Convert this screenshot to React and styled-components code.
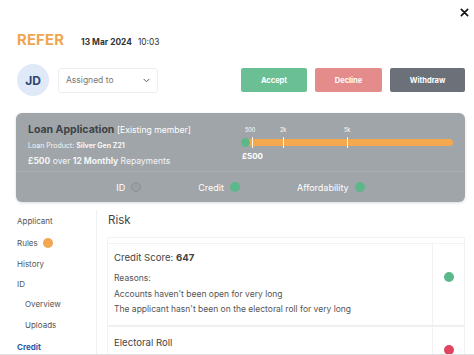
import React from "react";
import styled, { createGlobalStyle } from "styled-components";

const Global = createGlobalStyle`
  html, body { margin: 0; padding: 0; background: #fff; }
  body { font-family: Inter, "Open Sans", sans-serif; color: #555; }
  * { box-sizing: border-box; }
`;

const Modal = styled.div`
  width: 474px;
  height: 355px;
  overflow: hidden;
  padding: 0 9px 0 16px;
  border-bottom: 1px solid #ddd;
`;

const CloseRow = styled.div`
  display: flex;
  justify-content: flex-end;
  height: 24px;
  padding-top: 8px;
  margin-right: -4px;
`;

const TitleRow = styled.div`
  display: flex;
  align-items: baseline;
  gap: 17px;
  margin-top: 7px;
  padding-left: 1px;
`;

const Status = styled.span`
  color: #f0a650;
  font-weight: 700;
  font-size: 14.8px;
  letter-spacing: 0.2px;
`;

const DateText = styled.span`
  font-size: 8.4px;
  color: #333;
  font-weight: ${(p) => (p.$bold ? 700 : 400)};
  margin-left: ${(p) => (p.$bold ? 0 : "-11px")};
`;

const ActionRow = styled.div`
  display: flex;
  align-items: center;
  margin-top: 15px;
  height: 32px;
`;

const Avatar = styled.div`
  width: 32px;
  height: 32px;
  border-radius: 50%;
  background: #dfe9f8;
  color: #2c4775;
  font-weight: 700;
  font-size: 12px;
  display: flex;
  align-items: center;
  justify-content: center;
  margin-left: 1px;
`;

const Select = styled.div`
  margin-left: 9px;
  width: 100px;
  height: 25px;
  border: 1px solid #eceef0;
  border-radius: 3px;
  display: flex;
  align-items: center;
  justify-content: space-between;
  padding: 0 7px 0 7px;
  font-size: 8.5px;
  color: #777;
`;

const Buttons = styled.div`
  margin-left: auto;
  display: flex;
  gap: 8px;
`;

const Btn = styled.button`
  border: none;
  border-radius: 2px;
  height: 24px;
  width: ${(p) => p.$w}px;
  background: ${(p) => p.$bg};
  color: #fff;
  font-family: inherit;
  font-weight: 700;
  font-size: 7.5px;
  padding: 0;
`;

const Card = styled.div`
  margin-top: 17px;
  height: 89px;
  background: #a0a5a9;
  border-radius: 6px;
  box-shadow: 0 1px 3px rgba(0, 0, 0, 0.15);
  display: flex;
  flex-direction: column;
`;

const CardTop = styled.div`
  display: flex;
  padding: 10px 12px 0 12px;
  height: 59px;
  border-bottom: 1px solid rgba(255, 255, 255, 0.12);
`;

const Info = styled.div`
  width: 214px;
  display: flex;
  flex-direction: column;
`;

const InfoTitle = styled.div`
  font-size: 10.5px;
  font-weight: 700;
  color: #3d4246;
  line-height: 13px;
  span {
    font-weight: 400;
    color: #fff;
    font-size: 8.6px;
  }
`;

const InfoLine = styled.div`
  color: #f4f5f6;
  font-size: ${(p) => p.$size}px;
  margin-top: ${(p) => p.$mt}px;
  line-height: 12px;
  b { font-weight: 700; }
`;

const Range = styled.div`
  flex: 1;
  display: flex;
  flex-direction: column;
`;

const Ticks = styled.div`
  position: relative;
  height: 10px;
  font-size: 5.5px;
  color: #fff;
  margin-top: 4px;
`;

const TickLabel = styled.span`
  position: absolute;
  left: ${(p) => p.$x}px;
  top: 0;
`;

const Track = styled.div`
  position: relative;
  height: 7px;
  margin-top: 2px;
  background: #f4a94e;
  border-radius: 4px;
`;

const Knob = styled.div`
  position: absolute;
  left: -1px;
  top: -1px;
  width: 9px;
  height: 9px;
  border-radius: 50%;
  background: #5cb88a;
`;

const Pointer = styled.div`
  position: absolute;
  left: 8px;
  top: 5px;
  width: 0;
  height: 0;
  border-left: 3px solid transparent;
  border-right: 3px solid transparent;
  border-top: 4px solid #f4a94e;
`;

const TickMark = styled.div`
  position: absolute;
  left: ${(p) => p.$x}px;
  top: -2px;
  width: 1px;
  height: 11px;
  background: #fff5e0;
`;

const Amount = styled.div`
  margin-top: 5px;
  font-size: 8px;
  font-weight: 700;
  color: #fff;
`;

const Checks = styled.div`
  flex: 1;
  display: flex;
  justify-content: center;
  align-items: center;
  gap: 57px;
`;

const Check = styled.div`
  display: flex;
  align-items: center;
  gap: 6px;
  color: #fff;
  font-size: 9px;
`;

const Dot = styled.span`
  display: inline-block;
  width: ${(p) => p.$size || 10}px;
  height: ${(p) => p.$size || 10}px;
  border-radius: 50%;
  background: ${(p) => p.$color};
  border: ${(p) => (p.$ring ? "1px solid #8a8f93" : "none")};
`;

const Body = styled.div`
  display: grid;
  grid-template-columns: 81px 1fr;
  margin-top: 8px;
`;

const Side = styled.nav`
  border-right: 1px solid #f0f0f0;
  display: flex;
  flex-direction: column;
  min-height: 150px;
`;

const NavItem = styled.div`
  height: ${(p) => (p.$tight ? 17.7 : 21.7)}px;
  display: flex;
  align-items: center;
  gap: 5px;
  font-size: 8px;
  padding-left: ${(p) => (p.$sub ? 9 : 1)}px;
  color: ${(p) => (p.$active ? "#2d5aa8" : "#555")};
  font-weight: ${(p) => (p.$active ? 700 : 400)};
`;

const Main = styled.div`
  padding-left: 10px;
`;

const Heading = styled.div`
  font-size: 11.5px;
  color: #444;
  line-height: 14px;
  padding-left: 1px;
  padding-top: 3px;
`;

const Table = styled.div`
  margin-top: 10px;
  border: 1px solid #f2f2f2;
  border-bottom: none;
  padding-top: 5px;
`;

const Row = styled.div`
  display: grid;
  grid-template-columns: 1fr 31px;
  border-top: 1px solid #f2f2f2;
  border-bottom: ${(p) => (p.$last ? "none" : "1px solid #eee")};
`;

const RowMain = styled.div`
  padding: ${(p) => (p.$last ? "9px 6px 8px" : "7px 6px 7px")};
  border-right: 1px solid #f2f2f2;
`;

const RowStatus = styled.div`
  display: flex;
  justify-content: center;
  align-items: flex-start;
  padding-top: ${(p) => p.$pt}px;
`;

const ScoreTitle = styled.div`
  font-size: 9.6px;
  color: #444;
  line-height: 13px;
  b { font-weight: 700; }
`;

const Text = styled.div`
  font-size: 8.5px;
  color: #555;
  line-height: 15.5px;
  margin-top: ${(p) => p.$mt || 0}px;
`;

const CloseIcon = () => (
  <svg width="9" height="9" viewBox="0 0 10 10">
    <path d="M1.5 1.5 L8.5 8.5 M8.5 1.5 L1.5 8.5" stroke="#111" strokeWidth="1.8" strokeLinecap="round" />
  </svg>
);

const Chevron = () => (
  <svg width="7" height="5" viewBox="0 0 8 5">
    <path d="M1 1 L4 4 L7 1" stroke="#555" strokeWidth="1.1" fill="none" strokeLinecap="round" />
  </svg>
);

export default function App() {
  return (
    <>
      <Global />
      <Modal>
        <CloseRow>
          <CloseIcon />
        </CloseRow>
        <TitleRow>
          <Status>REFER</Status>
          <DateText $bold>13 Mar 2024</DateText>
          <DateText>10:03</DateText>
        </TitleRow>
        <ActionRow>
          <Avatar>JD</Avatar>
          <Select>
            <span>Assigned to</span>
            <Chevron />
          </Select>
          <Buttons>
            <Btn $w={66} $bg="#6abf94">Accept</Btn>
            <Btn $w={67} $bg="#e48b8b">Decline</Btn>
            <Btn $w={75} $bg="#6b7079">Withdraw</Btn>
          </Buttons>
        </ActionRow>
        <Card>
          <CardTop>
            <Info>
              <InfoTitle>
                Loan Application <span>[Existing member]</span>
              </InfoTitle>
              <InfoLine $size={7} $mt={3}>
                Loan Product: <b>Silver Gen Z21</b>
              </InfoLine>
              <InfoLine $size={8.5} $mt={3}>
                <b>£500</b> over <b>12 Monthly</b> Repayments
              </InfoLine>
            </Info>
            <Range>
              <Ticks>
                <TickLabel $x={3}>500</TickLabel>
                <TickLabel $x={38}>2k</TickLabel>
                <TickLabel $x={102}>5k</TickLabel>
              </Ticks>
              <Track>
                <Knob />
                <Pointer />
                <TickMark $x={10} />
                <TickMark $x={41} />
                <TickMark $x={105} />
              </Track>
              <Amount>£500</Amount>
            </Range>
          </CardTop>
          <Checks>
            <Check>
              ID <Dot $color="#9a9fa3" $ring />
            </Check>
            <Check>
              Credit <Dot $color="#5cb88a" />
            </Check>
            <Check>
              Affordability <Dot $color="#5cb88a" />
            </Check>
          </Checks>
        </Card>
        <Body>
          <Side>
            <NavItem>Applicant</NavItem>
            <NavItem>
              Rules <Dot $color="#f2a852" $size={10} />
            </NavItem>
            <NavItem>History</NavItem>
            <NavItem $tight>ID</NavItem>
            <NavItem $sub>Overview</NavItem>
            <NavItem $sub>Uploads</NavItem>
            <NavItem $active>Credit</NavItem>
          </Side>
          <Main>
            <Heading>Risk</Heading>
            <Table>
              <Row>
                <RowMain>
                  <ScoreTitle>
                    Credit Score: <b>647</b>
                  </ScoreTitle>
                  <Text $mt={7}>Reasons:</Text>
                  <Text>Accounts haven't been open for very long</Text>
                  <Text>The applicant hasn't been on the electoral roll for very long</Text>
                </RowMain>
                <RowStatus $pt={28}>
                  <Dot $color="#5cb88a" />
                </RowStatus>
              </Row>
              <Row $last>
                <RowMain $last>
                  <ScoreTitle>Electoral Roll</ScoreTitle>
                  <Text>&nbsp;</Text>
                </RowMain>
                <RowStatus $pt={18}>
                  <Dot $color="#e0455f" />
                </RowStatus>
              </Row>
            </Table>
          </Main>
        </Body>
      </Modal>
    </>
  );
}
